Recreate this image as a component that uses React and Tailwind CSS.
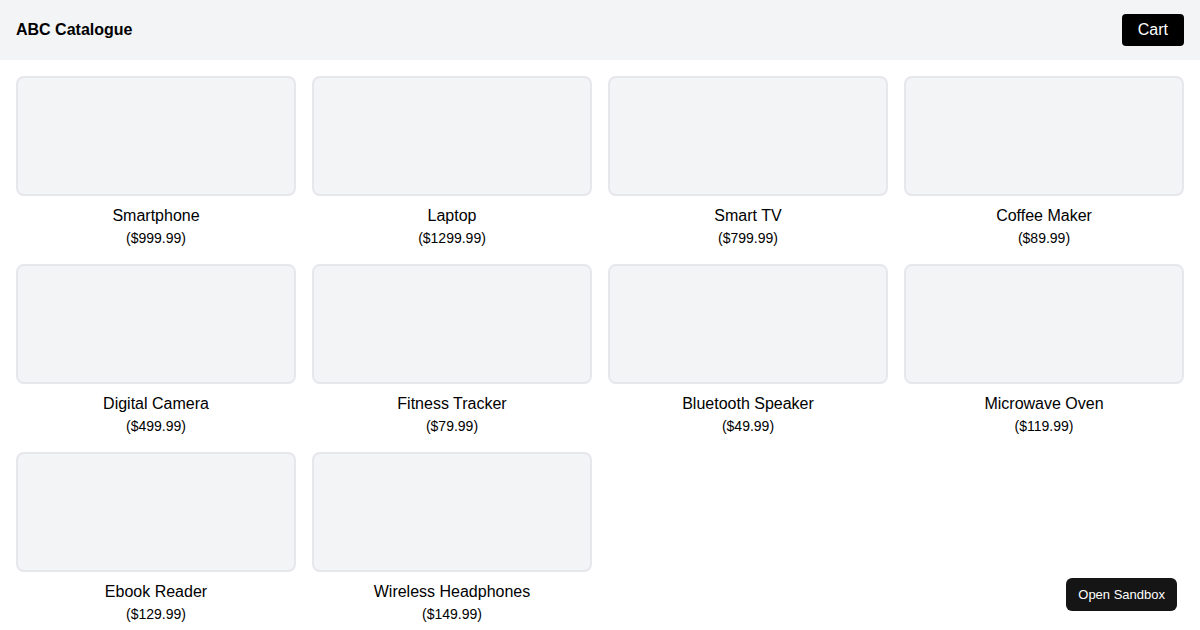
const products = [
  { name: "Smartphone", price: "999.99" },
  { name: "Laptop", price: "1299.99" },
  { name: "Smart TV", price: "799.99" },
  { name: "Coffee Maker", price: "89.99" },
  { name: "Digital Camera", price: "499.99" },
  { name: "Fitness Tracker", price: "79.99" },
  { name: "Bluetooth Speaker", price: "49.99" },
  { name: "Microwave Oven", price: "119.99" },
  { name: "Ebook Reader", price: "129.99" },
  { name: "Wireless Headphones", price: "149.99" },
];

export default function App() {
  return (
    <div className="min-h-screen bg-white text-black font-['Liberation_Sans',Arial,sans-serif]">
      <header className="flex items-center justify-between h-[60px] px-4 bg-gray-100">
        <h1 className="text-base font-bold">ABC Catalogue</h1>
        <button className="h-8 px-4 text-base text-white bg-black rounded">
          Cart
        </button>
      </header>
      <main className="grid grid-cols-4 gap-4 p-4">
        {products.map((p) => (
          <div key={p.name} className="flex flex-col items-center">
            <div className="w-full h-[120px] bg-gray-100 border-2 border-gray-200 rounded-lg" />
            <div className="mt-2 text-base leading-6">{p.name}</div>
            <div className="text-sm leading-5">(${p.price})</div>
          </div>
        ))}
      </main>
      <button className="fixed bottom-[19px] right-[23px] h-[33px] px-3 text-[13px] text-white bg-[#151515] rounded-md">
        Open Sandbox
      </button>
    </div>
  );
}
